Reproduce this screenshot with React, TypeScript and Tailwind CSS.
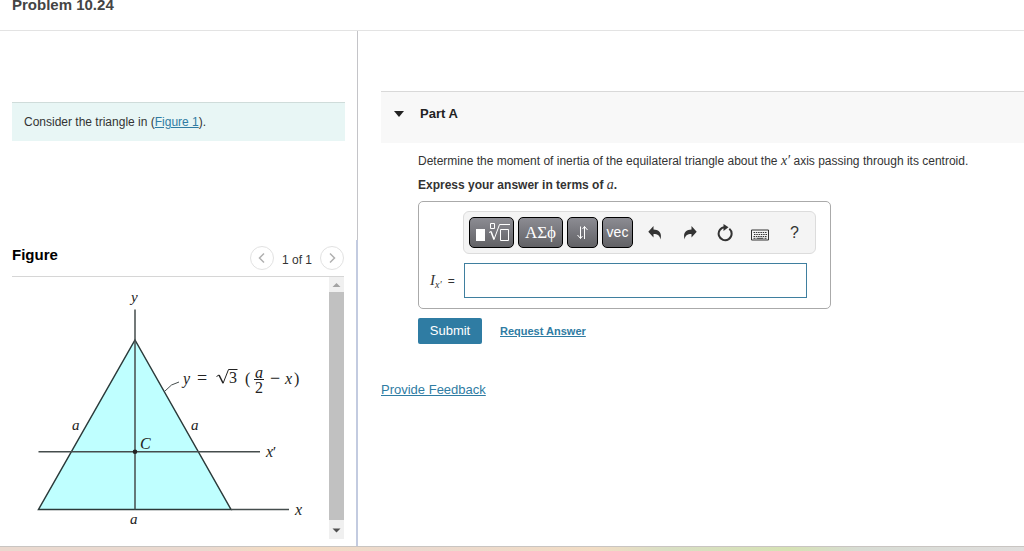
import { ReactNode } from "react";

const LINK = "text-[#2f7ca3] underline";

function MathText({ children }: { children: ReactNode }) {
    return <span className="font-['Liberation_Serif',serif] italic font-normal">{children}</span>;
}

function PagerButton({ label, d }: { label: string; d: string }) {
    return (
        <button
            type="button"
            aria-label={label}
            className="flex size-6 items-center justify-center rounded-full border border-[#e2e2e2] bg-white text-[#b0b0b0]">
            <svg viewBox="0 0 12 12" className="size-3" fill="none" stroke="currentColor" strokeWidth="1.5">
                <path d={d} />
            </svg>
        </button>
    );
}

function ScrollBar() {
    return (
        <div className="flex w-[15px] flex-col bg-[#f0f0f0]" aria-hidden="true">
            <svg viewBox="0 0 15 15" className="h-[15px] w-full" fill="#a3a3a3"><path d="M7.5 6 11.5 10h-8z" /></svg>
            <div className="flex-1 bg-[#c1c1c1]" />
            <svg viewBox="0 0 15 19" className="h-[19px] w-full" fill="#505050"><path d="M7.5 12.5 11.5 8.5h-8z" /></svg>
        </div>
    );
}

function TriangleFigure() {
    return (
        <svg
            viewBox="0 0 317 262"
            className="h-[262px] w-[317px]"
            role="img"
            aria-label="Equilateral triangle with side a and centroid C"
            fontFamily="'Liberation Serif', serif"
            fontSize="15"
            fill="#222">
            <path d="M123 63 219 232.500H26.500z" fill="#bfffff" stroke="#2b3a3a" strokeWidth="1.5" />
            <g fill="none" stroke="#454d4d" strokeWidth="1.5">
                <path d="M123 32.500V232.500M26.500 174.800H248M219 232.500H277" />
                <path d="M153 114q6-7.500 14-9" strokeWidth="1" />
            </g>
            <circle cx="123" cy="174.800" r="2.3" />
            <g fontStyle="italic">
                <text x="119" y="25">y</text>
                <text x="60" y="153">a</text>
                <text x="179" y="153">a</text>
                <text x="128" y="172" fontSize="16">C</text>
                <text x="254" y="180" fontSize="16">x</text>
                <text x="260" y="180">′</text>
                <text x="283" y="238" fontSize="16">x</text>
                <text x="118" y="247">a</text>
                <text x="171" y="107" fontSize="16">y</text>
                <text x="243" y="101" fontSize="16">a</text>
                <text x="273" y="107" fontSize="16">x</text>
            </g>
            <text x="185" y="107" fontSize="18">=</text>
            <text x="217" y="106" fontSize="16">3</text>
            <text x="233" y="107" fontSize="16">(</text>
            <text x="243" y="116" fontSize="16">2</text>
            <text x="258" y="107" fontSize="18">−</text>
            <text x="282" y="107" fontSize="16">)</text>
            <g fill="none" stroke="#222">
                <path d="M204.500 99.500l2.500-1.500" />
                <path d="M207 98l4 8" strokeWidth="1.6" />
                <path d="M211 106.500l5.500-14h9M242 102.500h10" />
            </g>
        </svg>
    );
}

function FigurePanel() {
    return (
        <section id="figure" className="flex-1 border-r-2 border-[#c3cbe0] pl-3 pr-3">
            <div className="flex h-[37px] items-center justify-between border-b border-[#d6d6d6]">
                <h2 className="pb-1.5 text-[15px] font-bold text-black">Figure</h2>
                <div className="flex items-center gap-2">
                    <PagerButton label="Previous figure" d="M8 1.500 3.500 6 8 10.500" />
                    <span className="pt-1 text-[12px]">1 of 1</span>
                    <PagerButton label="Next figure" d="M4 1.500 8.500 6 4 10.500" />
                </div>
            </div>
            <div className="flex">
                <div className="flex-1"><TriangleFigure /></div>
                <ScrollBar />
            </div>
        </section>
    );
}

function KeyButton({ label, className, children }: { label: string; className: string; children: ReactNode }) {
    return (
        <button
            type="button"
            aria-label={label}
            className={`flex h-[31px] items-center justify-center rounded-[5px] border border-black bg-linear-to-b from-[#8c8c93] to-[#626266] text-white ${className}`}>
            {children}
        </button>
    );
}

function ToolButton({ label, children }: { label: string; children: ReactNode }) {
    return (
        <button type="button" aria-label={label} className="flex h-8 w-[35px] items-center justify-center text-[#333]">
            {children}
        </button>
    );
}

function Toolbar() {
    return (
        <div className="flex h-[43px] items-center rounded-[6px] border border-[#dcdcdc] bg-[#f4f4f4] pl-[5px]">
            <div className="flex gap-1">
                <KeyButton label="Templates" className="w-[45px]">
                    <svg viewBox="0 0 37 23" className="h-[23px] w-[37px]" fill="none" stroke="#fff">
                        <path d="M3 8h9v12H3z" fill="#fff" stroke="none" />
                        <path d="M17.500 2.500h4v5h-4z" />
                        <path d="M16 11.500l2-1" />
                        <path d="M18 10.500l3 8" strokeWidth="1.6" />
                        <path d="M21 18.500 26.500 3.500H37" />
                        <path d="M27.500 8.500h8v11h-8z" />
                    </svg>
                </KeyButton>
                <KeyButton label="Symbols" className="w-[45px] font-['Liberation_Serif',serif] text-[17px]">ΑΣϕ</KeyButton>
                <KeyButton label="Swap" className="w-[31px]">
                    <svg viewBox="0 0 15 15" className="size-[15px]" fill="none" stroke="#fff">
                        <path d="M5.500 1.500v12M2.500 10l3 3.500 2-2.500" />
                        <path d="M9.500 14V1.500M7.500 4l2-2.500 3 3.500" />
                    </svg>
                </KeyButton>
                <KeyButton label="Vector" className="w-[31px] text-[14px]">vec</KeyButton>
            </div>
            <div className="ml-1 flex">
                <ToolButton label="Undo">
                    <svg viewBox="0 0 14 14" className="size-3.5" fill="currentColor">
                        <path d="M5.500 0v3.500c6 .2 8.800 4 6.800 10C12 9.800 9.800 8 5.500 8v3.500L.3 5.700z" />
                    </svg>
                </ToolButton>
                <ToolButton label="Redo">
                    <svg viewBox="0 0 14 14" className="size-3.5" fill="currentColor">
                        <path d="M8.500 0v3.500c-6 .2-8.800 4-6.800 10C2 9.800 4.200 8 8.500 8v3.500l5.200-5.800z" />
                    </svg>
                </ToolButton>
                <ToolButton label="Reset">
                    <svg viewBox="0 0 18 18" className="size-[18px]" fill="none" stroke="currentColor" strokeWidth="2">
                        <path d="M13.300 4.700A6.500 6.500 0 1 1 9 3.200" />
                        <path d="M7.500 0l5 3.300-5 3.700z" fill="currentColor" stroke="none" />
                    </svg>
                </ToolButton>
                <ToolButton label="Keyboard shortcuts">
                    <svg viewBox="0 0 18 12" className="mt-1 h-3 w-[18px]" fill="none" stroke="currentColor">
                        <path d="M.5 1h17v10H.5z" />
                        <path d="M2.500 3.500h13M3 5.500h13M2.500 7.500h13" strokeDasharray="1.500 .8" />
                        <path d="M2.500 9.300h2M5.500 9.300h7M13.500 9.300h2" />
                    </svg>
                </ToolButton>
                <ToolButton label="Help"><span className="text-[16px]">?</span></ToolButton>
            </div>
        </div>
    );
}

function AnswerBox() {
    return (
        <div className="w-[413px] max-w-full rounded-[5px] border border-[#aaa] pb-[10px] pt-[9px]">
            <div className="pl-11 pr-[14px]">
                <Toolbar />
            </div>
            <div className="mt-[9px] flex items-center pl-[11px] pr-[23px]">
                <label htmlFor="answer" className="flex w-[34px] items-center gap-1.5 text-[12px]">
                    <MathText><span className="text-[15px]">I</span><sub className="text-[10px]">x′</sub></MathText>
                    <span>=</span>
                </label>
                <input id="answer" type="text" className="h-[35px] min-w-0 flex-1 border border-[#3f7f9f] bg-white px-2 outline-none" />
            </div>
        </div>
    );
}

function PartA() {
    return (
        <main className="min-w-0 flex-1 pl-[23px] pt-[60px]">
            <div className="flex h-[52px] items-start border-t border-[#d9d9d9] bg-[#f8f8f8] pl-[13px] pt-3">
                <button type="button" className="flex items-center gap-4 text-[13px] font-bold leading-5 text-[#222]">
                    <svg viewBox="0 0 10 6" className="h-1.5 w-2.5" fill="#222"><path d="M0 0h10L5 6z" /></svg>
                    Part A
                </button>
            </div>
            <div className="pl-[37px] pt-2">
                <p className="text-[12px] leading-5">
                    Determine the moment of inertia of the equilateral triangle about the{" "}
                    <MathText><span className="text-[14px]">x′</span></MathText> axis passing through its centroid.
                </p>
                <p className="mb-[6px] mt-1 text-[12px] font-bold leading-5">
                    Express your answer in terms of <MathText><span className="text-[14px]">a</span></MathText>.
                </p>
                <AnswerBox />
                <div className="mt-[9px] flex items-center gap-[18px]">
                    <button type="button" className="h-[26px] w-16 rounded-[2px] bg-[#2f7ca3] text-[13px] text-white">Submit</button>
                    <a href="#request" className={`text-[11px] font-bold ${LINK}`}>Request Answer</a>
                </div>
            </div>
            <a href="#feedback" className={`mt-9 inline-block text-[13px] leading-5 ${LINK}`}>Provide Feedback</a>
        </main>
    );
}

export default function App() {
    return (
        <div className="flex min-h-screen flex-col bg-white font-['Liberation_Sans',Arial,sans-serif] text-[#333]">
            <header className="h-[31px] border-b border-[#e3e3e3] px-3">
                <h1 className="text-[15px] font-bold leading-[10px] text-[#444]">Problem 10.24</h1>
            </header>
            <div className="flex flex-1">
                <aside className="flex w-[358px] shrink-0 flex-col">
                    <div className="h-[209px] border-r border-[#c4c4c8] pl-3 pr-3 pt-[71px]">
                        <p className="border-t border-[#cfdcda] bg-[#e8f6f5] px-3 py-[9px] text-[12px] leading-5">
                            Consider the triangle in (<a href="#figure" className={LINK}>Figure 1</a>).
                        </p>
                    </div>
                    <FigurePanel />
                </aside>
                <PartA />
            </div>
            <footer className="h-[5px] border-t border-[#c9c5c2] bg-[linear-gradient(90deg,#ead9cf_0%,#ead9cf_20%,#f5dcc0_28%,#ead9cf_40%,#f2dcc4_58%,#d9dfc4_65%,#d6e2b4_77%,#d8dcd4_84%,#e0dedd_100%)]" />
        </div>
    );
}
